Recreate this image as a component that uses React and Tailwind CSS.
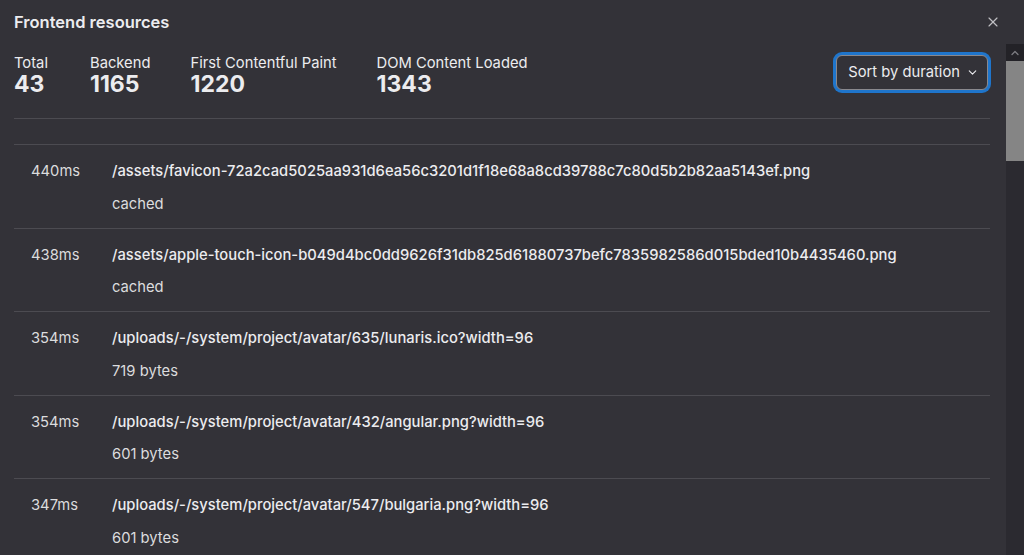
import { X, ChevronDown, ChevronUp } from "lucide-react";

const stats = [
  { label: "Total", value: "43" },
  { label: "Backend", value: "1165" },
  { label: "First Contentful Paint", value: "1220" },
  { label: "DOM Content Loaded", value: "1343" },
];

const resources = [
  { ms: 440, url: "/assets/favicon-72a2cad5025aa931d6ea56c3201d1f18e68a8cd39788c7c80d5b2b82aa5143ef.png", size: "cached" },
  { ms: 438, url: "/assets/apple-touch-icon-b049d4bc0dd9626f31db825d61880737befc7835982586d015bded10b4435460.png", size: "cached" },
  { ms: 354, url: "/uploads/-/system/project/avatar/635/lunaris.ico?width=96", size: "719 bytes" },
  { ms: 354, url: "/uploads/-/system/project/avatar/432/angular.png?width=96", size: "601 bytes" },
  { ms: 347, url: "/uploads/-/system/project/avatar/547/bulgaria.png?width=96", size: "601 bytes" },
  { ms: 341, url: "/uploads/-/system/project/avatar/212/hermes.png?width=96", size: "601 bytes" },
];

function Scrollbar() {
  return (
    <div className="w-[18px] shrink-0 flex flex-col bg-[#2b2a30]">
      <div className="h-[17px] flex items-center justify-center bg-[#232227] text-[#7d7c82]">
        <ChevronUp size={12} strokeWidth={2.5} />
      </div>
      <div className="h-[100px] bg-[#858585]" />
    </div>
  );
}

export default function App() {
  return (
    <div
      className="h-[555px] w-[1024px] flex flex-col overflow-hidden bg-[#333238] text-[#ececef] text-[14.75px]"
      style={{ fontFamily: "Inter, 'Noto Sans', sans-serif" }}
    >
      <div className="h-[44px] shrink-0 flex items-center justify-between pl-[14px] pr-[23px]">
        <h2 className="text-[16.5px] font-semibold text-[#ececef]">Frontend resources</h2>
        <X size={16} strokeWidth={1.75} className="text-[#bfbfc3]" />
      </div>

      <div className="flex-1 min-h-0 flex">
        <div className="flex-1 overflow-hidden pl-[14px] pr-[16px]">
          <div className="flex items-start justify-between pt-[9px] pb-[22px] border-b border-[#4c4b51]">
            <div className="flex gap-10">
              {stats.map((s) => (
                <div key={s.label} className="flex flex-col min-w-[36px]">
                  <span className="leading-5">{s.label}</span>
                  <span className="text-[23px] font-bold leading-[23px]">{s.value}</span>
                </div>
              ))}
            </div>
            <button className="mt-[2px] mr-[2px] h-[35px] flex items-center gap-[6px] pl-[11px] pr-[8px] rounded-md border border-[#89888d] bg-[#333238] text-[#ececef] ring-[3px] ring-[#1f75cb]">
              Sort by duration
              <ChevronDown size={13} strokeWidth={2} />
            </button>
          </div>

          <div className="h-[26px] border-b border-[#4c4b51]" />

          {resources.map((r, i) => (
            <div key={i} className="flex pt-4 pb-[14px] border-b border-[#4c4b51]">
              <div className="w-[98px] shrink-0 pl-[17px] leading-5 text-[#dcdcde]">{r.ms}ms</div>
              <div className="flex flex-col">
                <span className="leading-5 font-medium text-[#ececef]">{r.url}</span>
                <span className="leading-5 mt-[12.5px] text-[#dcdcde]">{r.size}</span>
              </div>
            </div>
          ))}
        </div>
        <Scrollbar />
      </div>
    </div>
  );
}
